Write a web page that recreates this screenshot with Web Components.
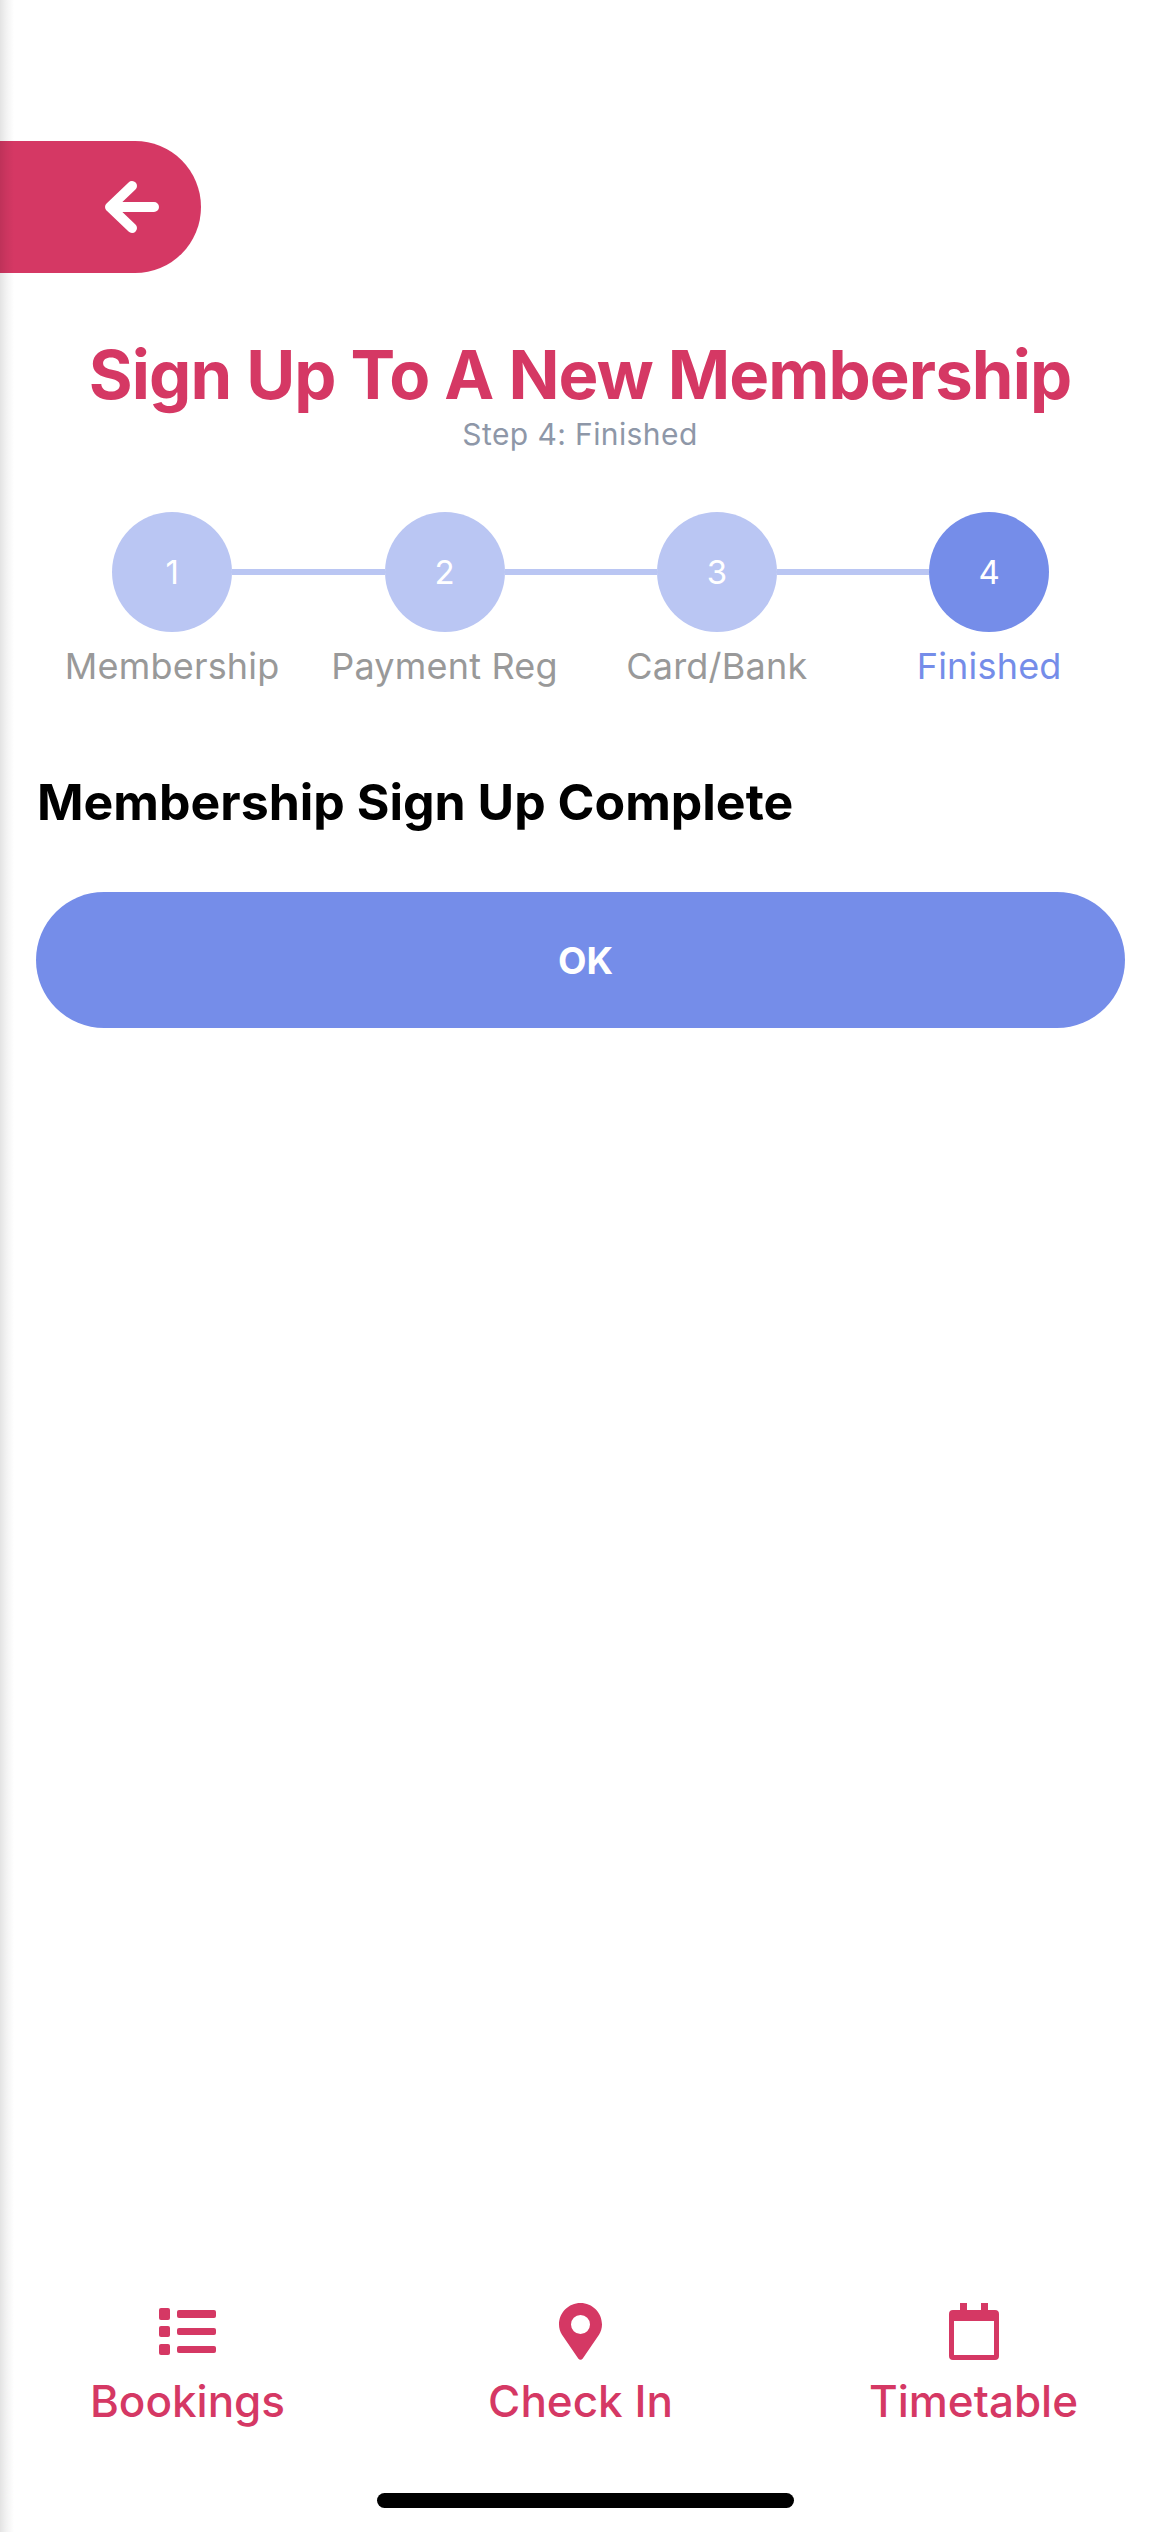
<!DOCTYPE html>
<html>
<head>
<meta charset="utf-8">
<title>Sign Up</title>
<style>
    html, body { margin: 0; padding: 0; background: #fff; }
</style>
</head>
<body>
<signup-screen>
    <back-button slot="back"></back-button>
    <page-heading slot="heading" subtitle="Step 4: Finished">Sign Up To A New Membership</page-heading>
    <step-bar slot="steps">
        <step-item number="1" label="Membership"></step-item>
        <step-item number="2" label="Payment Reg"></step-item>
        <step-item number="3" label="Card/Bank"></step-item>
        <step-item number="4" label="Finished" active></step-item>
    </step-bar>
    <span slot="message">Membership Sign Up Complete</span>
    <primary-button slot="action">OK</primary-button>
    <tab-bar slot="tabs">
        <tab-item label="Bookings">
            <svg viewBox="0 0 57 47" width="57" height="47" fill="#d53864">
                <rect x="0" y="0" width="11" height="12" rx="2"/>
                <rect x="0" y="18" width="11" height="11" rx="2"/>
                <rect x="0" y="36" width="11" height="11" rx="2"/>
                <rect x="18" y="2" width="39" height="8" rx="2"/>
                <rect x="18" y="20" width="39" height="7" rx="2"/>
                <rect x="18" y="38" width="39" height="7" rx="2"/>
            </svg>
        </tab-item>
        <tab-item label="Check In">
            <svg viewBox="0 0 43 57" width="43" height="57">
                <path fill="#d53864" fill-rule="evenodd" d="M21.5 0C9.6 0 0 9.6 0 21.5c0 4 1.2 7.2 3 10.2l16.4 24c1 1.5 3.2 1.5 4.2 0L40 31.700c1.800-3 3-6.200 3-10.200C43 9.600 33.400 0 21.500 0zM21.500 12a9.500 9.500 0 1 1 0 19 9.500 9.500 0 0 1 0-19z"/>
            </svg>
        </tab-item>
        <tab-item label="Timetable">
            <svg viewBox="0 0 50 57" width="50" height="57" fill="#d53864">
                <path fill-rule="evenodd" d="M11 0h7v7h14V0h7v7h7a4 4 0 0 1 4 4v42a4 4 0 0 1-4 4H4a4 4 0 0 1-4-4V11a4 4 0 0 1 4-4h7zM5 18v34h40V18z"/>
            </svg>
        </tab-item>
    </tab-bar>
</signup-screen>

<script>
class SignupScreen extends HTMLElement {
    constructor() {
        super();
        this.attachShadow({ mode: "open" });
        this.shadowRoot.innerHTML = `
            <style>
                :host {
                    display: flex;
                    flex-direction: column;
                    position: relative;
                    width: 1170px;
                    height: 2532px;
                    overflow: hidden;
                    background: #fff;
                    font-family: Inter, "Liberation Sans", sans-serif;
                }
                .message {
                    margin: 84px 0 0 37px;
                    font-size: 50px;
                    line-height: 60px;
                    font-weight: 700;
                    color: #000;
                }
                .tabs { margin-top: auto; }
                .home {
                    width: 417px;
                    height: 15px;
                    margin: 65px 0 24px 377px;
                    border-radius: 8px;
                    background: #000;
                }
                /* shadow of the page underneath, runs along the left edge */
                .edge {
                    position: absolute;
                    left: 0;
                    top: 0;
                    bottom: 0;
                    width: 14px;
                    background: linear-gradient(to right, rgba(0,0,0,.11), rgba(0,0,0,.05) 45%, rgba(0,0,0,0));
                    pointer-events: none;
                }
            </style>
            <slot name="back"></slot>
            <slot name="heading"></slot>
            <slot name="steps"></slot>
            <div class="message"><slot name="message"></slot></div>
            <slot name="action"></slot>
            <div class="tabs"><slot name="tabs"></slot></div>
            <div class="home"></div>
            <div class="edge"></div>
        `;
    }
}

class BackButton extends HTMLElement {
    constructor() {
        super();
        this.attachShadow({ mode: "open" });
        this.shadowRoot.innerHTML = `
            <style>
                :host {
                    display: flex;
                    align-items: center;
                    justify-content: flex-end;
                    box-sizing: border-box;
                    width: 201px;
                    height: 132px;
                    margin-top: 141px;
                    padding-right: 42px;
                    border-radius: 0 66px 66px 0;
                    background: #d53864;
                }
            </style>
            <svg viewBox="0 0 54 52" width="54" height="52" fill="none" stroke="#fff" stroke-width="10" stroke-linecap="round" stroke-linejoin="round">
                <path d="M49 26H6M27 5 5 26l22 21"/>
            </svg>
        `;
    }
}

class PageHeading extends HTMLElement {
    constructor() {
        super();
        this.attachShadow({ mode: "open" });
    }

    connectedCallback() {
        this.shadowRoot.innerHTML = `
            <style>
                :host {
                    display: block;
                    width: 1160px;
                    margin-top: 62px;
                    text-align: center;
                }
                h1 {
                    margin: 0;
                    font-size: 67px;
                    line-height: 80px;
                    font-weight: 700;
                    letter-spacing: -.9px;
                    color: #d53864;
                }
                p {
                    margin: 1px 0 0;
                    font-size: 30px;
                    line-height: 36px;
                    letter-spacing: .4px;
                    color: #8e97a8;
                }
            </style>
            <h1><slot></slot></h1>
            <p>${this.getAttribute("subtitle")}</p>
        `;
    }
}

class StepBar extends HTMLElement {
    constructor() {
        super();
        this.attachShadow({ mode: "open" });
        this.shadowRoot.innerHTML = `
            <style>
                :host {
                    display: grid;
                    grid-template-columns: repeat(4, 272.33px);
                    margin: 60px 0 0 36px;
                }
            </style>
            <slot></slot>
        `;
    }
}

class StepItem extends HTMLElement {
    constructor() {
        super();
        this.attachShadow({ mode: "open" });
    }

    connectedCallback() {
        this.shadowRoot.innerHTML = `
            <style>
                :host {
                    display: block;
                    text-align: center;
                    --circle: #bac6f3;
                    --label: #999999;
                }
                :host([active]) {
                    --circle: #758de9;
                    --label: #758de9;
                }
                .row { display: flex; align-items: center; }
                .line { flex: 1; height: 6px; background: #bac6f3; }
                :host(:first-child) .before, :host(:last-child) .after { background: transparent; }
                .circle {
                    display: flex;
                    align-items: center;
                    justify-content: center;
                    width: 120px;
                    height: 120px;
                    border-radius: 50%;
                    background: var(--circle);
                    color: #fff;
                    font-size: 33px;
                }
                .label {
                    margin-top: 12px;
                    font-size: 36px;
                    line-height: 44px;
                    letter-spacing: .2px;
                    color: var(--label);
                }
            </style>
            <div class="row">
                <div class="line before"></div>
                <div class="circle">${this.getAttribute("number")}</div>
                <div class="line after"></div>
            </div>
            <div class="label">${this.getAttribute("label")}</div>
        `;
    }
}

class PrimaryButton extends HTMLElement {
    constructor() {
        super();
        this.attachShadow({ mode: "open" });
        this.shadowRoot.innerHTML = `
            <style>
                :host {
                    display: flex;
                    align-items: center;
                    justify-content: center;
                    box-sizing: border-box;
                    width: 1089px;
                    height: 136px;
                    margin: 60px 0 0 36px;
                    padding: 0 0 0 10px;
                    border-radius: 68px;
                    background: #758de9;
                    color: #fff;
                    font-size: 37px;
                    font-weight: 700;
                }
            </style>
            <slot></slot>
        `;
    }
}

class TabBar extends HTMLElement {
    constructor() {
        super();
        this.attachShadow({ mode: "open" });
        this.shadowRoot.innerHTML = `
            <style>
                :host {
                    display: grid;
                    grid-template-columns: repeat(3, 393px);
                    margin-left: -9px;
                }
            </style>
            <slot></slot>
        `;
    }
}

class TabItem extends HTMLElement {
    constructor() {
        super();
        this.attachShadow({ mode: "open" });
    }

    connectedCallback() {
        this.shadowRoot.innerHTML = `
            <style>
                :host {
                    display: flex;
                    flex-direction: column;
                    align-items: center;
                    color: #d53864;
                }
                .icon {
                    display: flex;
                    align-items: center;
                    justify-content: center;
                    height: 57px;
                }
                .label {
                    margin-top: 14px;
                    font-size: 44px;
                    line-height: 54px;
                    font-weight: 500;
                }
            </style>
            <div class="icon"><slot></slot></div>
            <div class="label">${this.getAttribute("label")}</div>
        `;
    }
}

customElements.define('signup-screen', SignupScreen);
customElements.define('back-button', BackButton);
customElements.define('page-heading', PageHeading);
customElements.define('step-bar', StepBar);
customElements.define('step-item', StepItem);
customElements.define('primary-button', PrimaryButton);
customElements.define('tab-bar', TabBar);
customElements.define('tab-item', TabItem);
</script>
</body>
</html>
